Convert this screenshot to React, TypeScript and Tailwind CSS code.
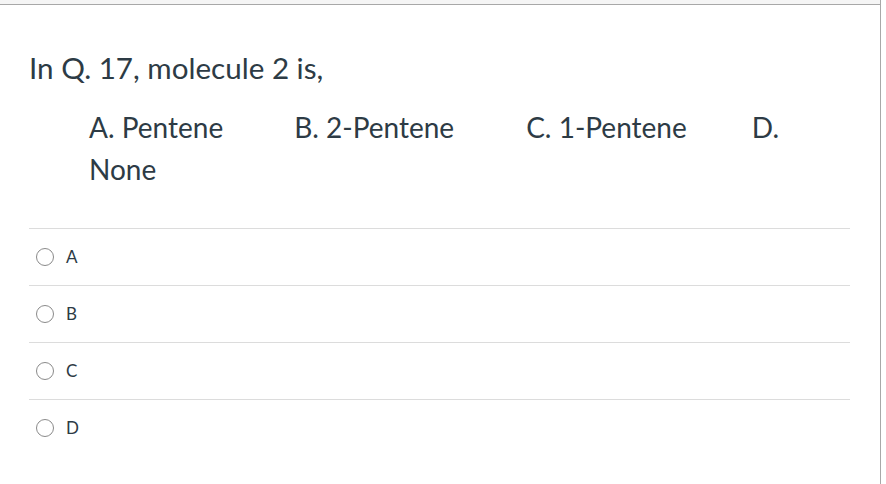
import React from "react";

const opts = ["A", "B", "C", "D"];

export default function App() {
  return (
    <div className="w-[886px] h-[484px] bg-white overflow-hidden text-[#2d3b45]" style={{ fontFamily: "Lato, 'Open Sans', sans-serif" }}>
      <div className="w-[881px] h-[484px] border-r border-[#a8a8a8] flex flex-col">
        <div className="h-[5px] shrink-0 bg-[#f5f5f5] border-b border-[#a8a8a8]" />
        <div className="pl-[29px] pt-[42px]">
          <p className="text-[29.6px] leading-[42px]">In Q. 17, molecule 2 is,</p>
          <div className="mt-[17px] ml-[60px] w-[740px] text-[28px] leading-[42px]">
            <span className="mr-[71px]">A. Pentene</span>
            <span className="mr-[72px]">B. 2-Pentene</span>
            <span className="mr-[65px]">C. 1-Pentene</span>
            <span>D.</span>{" "}
            <span>None</span>
          </div>
          <div className="mt-[38px] w-[821px]">
            {opts.map((o) => (
              <div key={o} className="h-[57px] border-t border-[#dcdcdc] flex items-center">
                <span className="ml-[7px] w-[18px] h-[18px] rounded-full border-[1.5px] border-[#8a8a8a] box-border" />
                <span className="ml-[12px] text-[17px]">{o}</span>
              </div>
            ))}
          </div>
        </div>
      </div>
    </div>
  );
}
